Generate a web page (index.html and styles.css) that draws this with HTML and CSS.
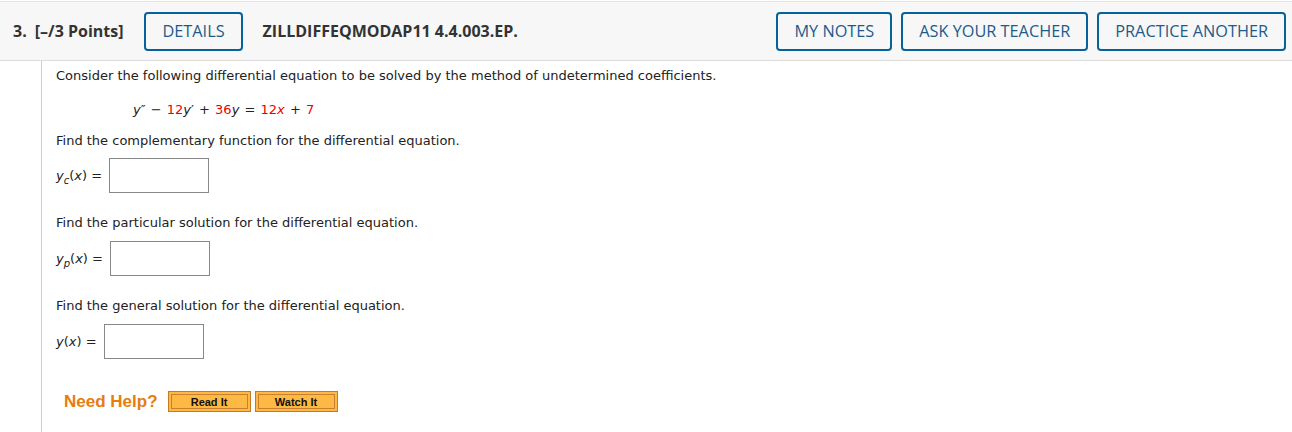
FILE: index.html
```html
<!DOCTYPE html>
<html>
<head>
<meta charset="utf-8">
<link rel="stylesheet" href="styles.css">
</head>
<body>
<div class="header">
  <span class="qnum">3.</span>
  <span class="points">[–/3 Points]</span>
  <span class="btn details">DETAILS</span>
  <span class="title">ZILLDIFFEQMODAP11 4.4.003.EP.</span>
  <div class="right">
    <span class="btn">MY NOTES</span>
    <span class="btn">ASK YOUR TEACHER</span>
    <span class="btn">PRACTICE ANOTHER</span>
  </div>
</div>
<div class="content">
  <p class="line first">Consider the following differential equation to be solved by the method of undetermined coefficients.</p>
  <p class="eq"><i>y</i>″ − <span class="red">12</span><i>y</i>′ + <span class="red">36</span><i>y</i> = <span class="red">12</span><i class="red">x</i> + <span class="red">7</span></p>
  <p class="line q1">Find the complementary function for the differential equation.</p>
  <div class="answer a1"><span class="lbl"><i>y</i><sub><i>c</i></sub>(<i>x</i>) =</span><span class="box"></span></div>
  <p class="line q">Find the particular solution for the differential equation.</p>
  <div class="answer"><span class="lbl"><i>y</i><sub><i>p</i></sub>(<i>x</i>) =</span><span class="box"></span></div>
  <p class="line q">Find the general solution for the differential equation.</p>
  <div class="answer"><span class="lbl"><i>y</i>(<i>x</i>) =</span><span class="box"></span></div>
  <div class="help">
    <span class="need">Need Help?</span>
    <span class="hbtn">Read It</span>
    <span class="hbtn">Watch It</span>
  </div>
</div>
</body>
</html>
```

FILE: styles.css
```css
html, body { margin: 0; padding: 0; background: #fff; }
body { height: 432px; overflow: hidden; }
.header {
  margin-top: 1px;
  border-top: 1px solid #e3e3e3;
  border-bottom: 1px solid #dcdcdc;
  background: #f7f7f7;
  box-sizing: border-box;
  height: 60px;
  display: flex;
  align-items: center;
  padding: 0 6px 0 13px;
  font-family: "Open Sans", sans-serif;
  font-weight: 700;
  font-size: 16px;
  color: #333;
}
.qnum { margin-right: 8px; }
.points { margin-right: 21px; }
.btn {
  box-sizing: border-box;
  height: 39px;
  display: inline-flex;
  align-items: center;
  border: 2px solid #06629c;
  border-radius: 4px;
  padding: 0 16px;
  color: #1c5b8c;
  font-weight: 400;
  font-size: 16.3px;
  background: #f7f7f7;
}
.title { margin-left: 20px; }
.right { margin-left: auto; display: flex; gap: 9px; }
.content {
  margin-left: 41px;
  border-left: 1px solid #cfcfcf;
  padding-left: 14px;
  height: 372px;
  font-family: "DejaVu Sans", Verdana, sans-serif;
  font-size: 13px;
  color: #222;
}
.line { margin: 0; padding: 0; line-height: 16px; }
.first { padding-top: 7px; }
.eq { margin: 18px 0 0 77px; line-height: 16px; word-spacing: 1px; }
.q1 { margin-top: 15px; }
.q { margin-top: 22px; }
.red { color: #e00; }
.answer { display: flex; align-items: center; margin-top: 10px; }
.answer.a1 { margin-top: 9px; }
.lbl { margin-right: 7px; }
sub { font-size: 10px; vertical-align: -4px; line-height: 0; }
.box {
  width: 100px;
  height: 35px;
  box-sizing: border-box;
  border: 1px solid #888;
  background: #fff;
}
.help { display: flex; align-items: center; margin: 32px 0 0 8px; font-family: "Liberation Sans", Arial, sans-serif; }
.need { color: #e87c0c; font-weight: bold; font-size: 17px; margin-right: 10px; }
.hbtn {
  box-sizing: border-box;
  width: 83px; height: 21px;
  border: 1px solid #c77a25;
  background: #fdb944;
  box-shadow: inset 0 0 0 2px #fdb944, inset 0 0 0 3px #c97f2e;
  font-size: 11px; font-weight: bold; color: #111;
  display: inline-flex; align-items: center; justify-content: center;
  margin-right: 4px;
}
```
